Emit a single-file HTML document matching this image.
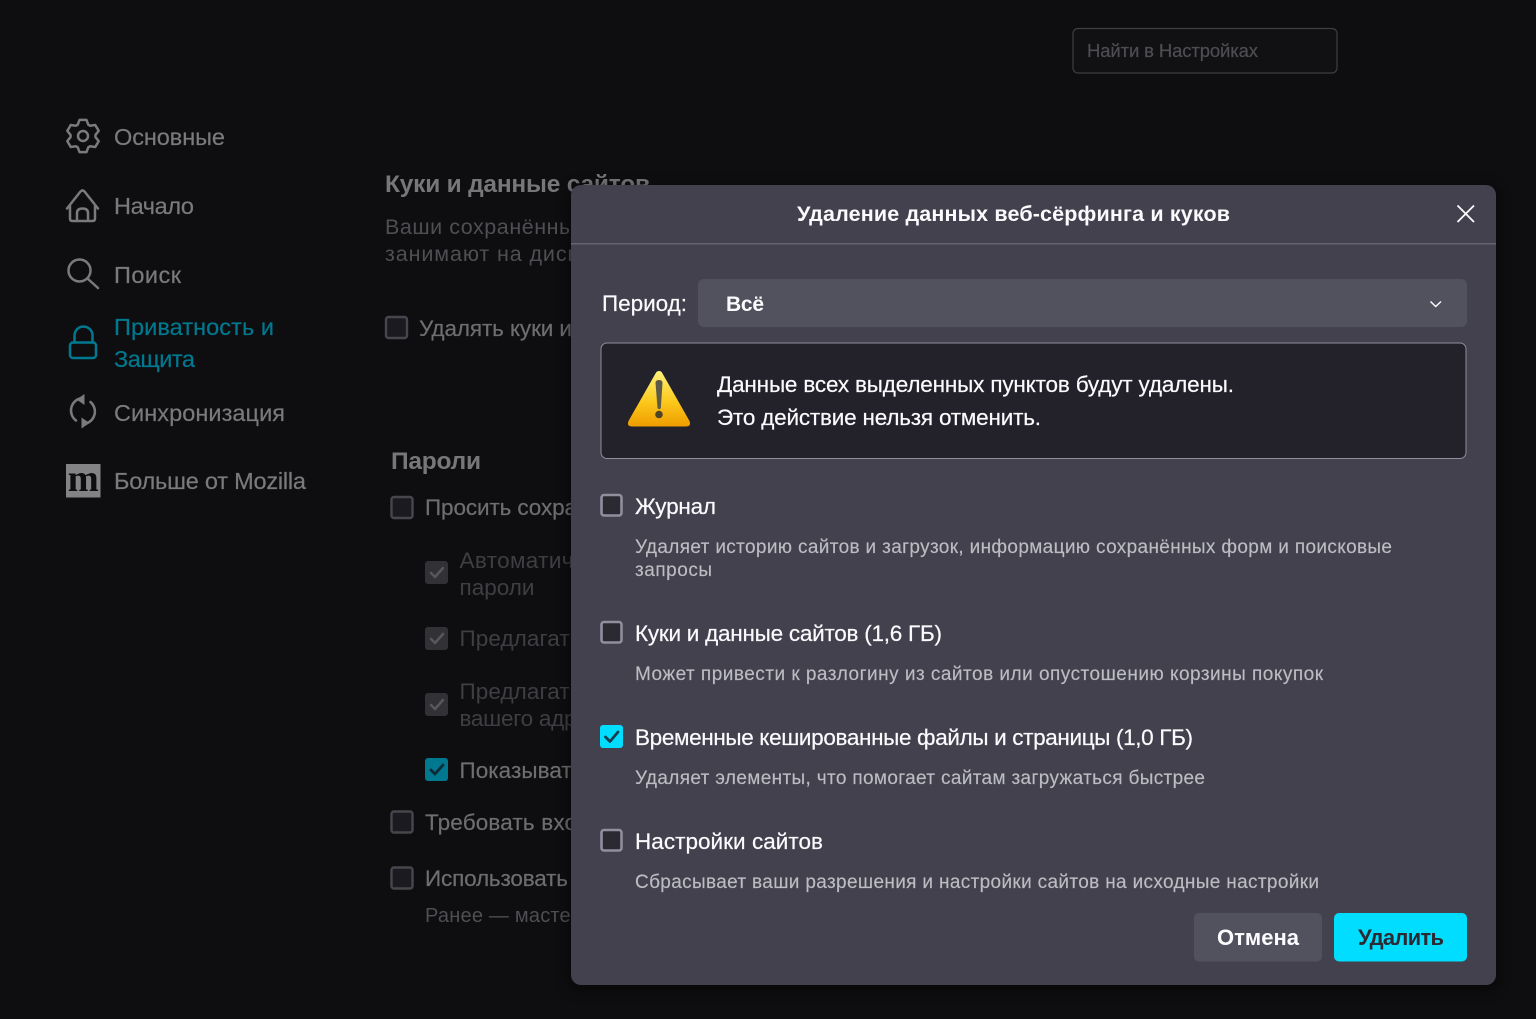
<!DOCTYPE html>
<html lang="ru">
<head>
<meta charset="utf-8">
<title>Настройки</title>
<style>
html,body{margin:0;padding:0;background:#0e0e10;width:1536px;height:1019px;overflow:hidden}
svg{display:block}
text{font-family:"Liberation Sans","Noto Sans CJK SC",sans-serif;white-space:pre}
.nav{font-size:23.5px;fill:#7a7a7d;stroke:#7a7a7d;stroke-width:.2px}
.h{font-size:24.5px;font-weight:bold;fill:#77777a}
.d{font-size:21.5px;fill:#4f4f53}
.l{font-size:22.5px;fill:#6e6e71;stroke:#6e6e71;stroke-width:.2px}
.dis{font-size:22.5px;fill:#3f3f43}
.cb{fill:#1b1a20;stroke:#47464c;stroke-width:2.4}
.w{font-size:22.5px;fill:#fbfbfe;stroke:#fbfbfe;stroke-width:.2px}
.s{font-size:19px;fill:#bcbcc3;stroke:#bcbcc3;stroke-width:.15px}
.c{fill:#2b2a33;stroke:#8f8f9d;stroke-width:2.6}
</style>
</head>
<body>
<svg width="1536" height="1019" viewBox="0 0 1536 1019" xmlns="http://www.w3.org/2000/svg">
<defs>
<linearGradient id="y" x1="0" y1="0" x2="0" y2="1"><stop offset="0" stop-color="#fff27a"/><stop offset=".55" stop-color="#fcc91c"/><stop offset="1" stop-color="#ef9c00"/></linearGradient>
<filter id="sh" x="-5%" y="-5%" width="110%" height="110%"><feGaussianBlur stdDeviation="6"/></filter>
</defs>
<rect width="1536" height="1019" fill="#0e0e10"/>

<!-- search -->
<rect x="1073" y="28.500" width="264" height="44.500" rx="5" fill="#111114" stroke="#3e3e41" stroke-width="1.200"/>
<text x="1087" y="57" font-size="18.500" fill="#4e4e52" stroke="#4e4e52" stroke-width=".2" textLength="171">Найти в Настройках</text>

<!-- nav icons -->
<g fill="none" stroke="#7a7a7d" stroke-width="2.500" stroke-linejoin="round" stroke-linecap="round">
<g transform="translate(83 136)">
<path d="M-5.280-11.330-3.430-16.140 3.430-16.140 5.280-11.330 7.170-10.240 12.260-11.040 15.690-5.100 12.450-1.090 12.450 1.090 15.690 5.100 12.260 11.040 7.170 10.240 5.280 11.330 3.430 16.140-3.430 16.140-5.280 11.330-7.170 10.240-12.260 11.040-15.690 5.100-12.450 1.090-12.450-1.090-15.690-5.100-12.260-11.040-7.170-10.240Z"/>
<circle r="5"/>
</g>
<path d="M67 208.500 80.500 191.500Q82.500 189.500 84.500 191.500L98 208.500M70 206V218.500Q70 221 72.500 221H92.500Q95 221 95 218.500V206M77 221V213Q77 208.500 82.500 208.500 88 208.500 88 213V221"/>
<circle cx="79.500" cy="270.500" r="11"/>
<path d="M88 279 98 288"/>
<path d="M74.500 342.500V335.500A9 9 0 0 1 92.500 335.500V342.500" stroke="#00788f"/>
<rect x="70" y="342.500" width="26" height="15.500" rx="3" stroke="#00788f"/>
<path d="M80 398.500A12.500 12.500 0 0 0 76 420.500M86 423.500A12.500 12.500 0 0 0 90.500 402"/>
</g>
<path d="M84.500 394 76.500 399.500 84.500 405ZM81.500 417.500 89.500 423 81.500 428.500Z" fill="#7a7a7d"/>
<rect x="66" y="464" width="34.500" height="33.500" fill="#838386"/>
<text x="83.300" y="491" font-size="38" font-weight="bold" text-anchor="middle" fill="#0e0e10" style='font-family:"Liberation Serif",serif' textLength="31" lengthAdjust="spacingAndGlyphs">m</text>

<!-- nav text -->
<text class="nav" x="114" y="145" textLength="111">Основные</text>
<text class="nav" x="114" y="214" textLength="80">Начало</text>
<text class="nav" x="114" y="283" textLength="67">Поиск</text>
<text class="nav" x="114" y="335" textLength="160" style="fill:#00788f;stroke:#00788f">Приватность и</text>
<text class="nav" x="114" y="367" textLength="81" style="fill:#00788f;stroke:#00788f">Защита</text>
<text class="nav" x="114" y="421" textLength="171">Синхронизация</text>
<text class="nav" x="114" y="489" textLength="192">Больше от Mozilla</text>

<!-- page content -->
<text class="h" x="385" y="192" textLength="265">Куки и данные сайтов</text>
<text class="d" x="385" y="234" textLength="202">Ваши сохранённые</text>
<text class="d" x="385" y="261" textLength="205">занимают на диске</text>
<rect class="cb" x="386" y="317" width="21" height="21" rx="2.500"/>
<text class="l" x="419" y="336" textLength="153">Удалять куки и</text>
<text class="h" x="391" y="469" textLength="90">Пароли</text>
<rect class="cb" x="391.500" y="497" width="21" height="21" rx="2.500"/>
<text class="l" x="425" y="515" textLength="152">Просить сохра</text>

<g fill="#323136"><rect x="425" y="561" width="23" height="23" rx="3"/><rect x="425" y="627" width="23" height="23" rx="3"/><rect x="425" y="693" width="23" height="23" rx="3"/></g>
<g fill="none" stroke="#58585c" stroke-width="2.500" stroke-linecap="round" stroke-linejoin="round"><path d="M431 573l4 4 8-9"/><path d="M431 639l4 4 8-9"/><path d="M431 705l4 4 8-9"/></g>
<rect x="425" y="758" width="23" height="23" rx="3" fill="#00788f"/>
<path d="M431 770l4 4 8-9" fill="none" stroke="#0e2a36" stroke-width="2.800" stroke-linecap="round" stroke-linejoin="round"/>

<text class="dis" x="459.500" y="568" textLength="114">Автоматич</text>
<text class="dis" x="459.500" y="595" textLength="75">пароли</text>
<text class="dis" x="459.500" y="646" textLength="122">Предлагать</text>
<text class="dis" x="459.500" y="699" textLength="122">Предлагать</text>
<text class="dis" x="459.500" y="726" textLength="117">вашего адр</text>
<text class="l" x="459.500" y="778" textLength="124">Показывать</text>
<rect class="cb" x="391.500" y="811.500" width="21" height="21" rx="2.500"/>
<text class="l" x="425" y="830" textLength="152">Требовать вхо</text>
<rect class="cb" x="391.500" y="867.500" width="21" height="21" rx="2.500"/>
<text class="l" x="425" y="886" textLength="143">Использовать</text>
<text class="d" x="425" y="922" textLength="157" style="font-size:20px">Ранее — мастер</text>

<!-- dialog -->
<rect x="567" y="185" width="933" height="806" rx="12" fill="#000" opacity=".35" filter="url(#sh)"/>
<rect x="571" y="185" width="925" height="800" rx="10" fill="#42414d"/>
<rect x="571" y="243" width="925" height="1.500" fill="#65646f"/>
<text x="797" y="221" font-size="21.500" font-weight="bold" fill="#fbfbfe" textLength="433">Удаление данных веб-сёрфинга и куков</text>
<path d="M1457.500 205.500 1474 222M1474 205.500 1457.500 222" stroke="#fbfbfe" stroke-width="1.800" fill="none"/>

<text class="w" x="602" y="311" textLength="85">Период:</text>
<rect x="698" y="279" width="769" height="48" rx="6" fill="#52525e"/>
<text x="726" y="311" font-size="21" font-weight="bold" fill="#fbfbfe" textLength="38">Всё</text>
<path d="M1430.500 301.500 1435.700 306.500 1441 301.500" fill="none" stroke="#fbfbfe" stroke-width="1.500"/>

<rect x="601" y="343" width="865" height="115.500" rx="6" fill="#23222b" stroke="#8f8f9d" stroke-width="1"/>
<path d="M659 371Q661.500 371 662.500 373.500L689.500 421Q691.500 426.500 686 426.500H632Q626.500 426.500 628.500 421L655.500 373.500Q656.800 371 659 371Z" fill="url(#y)"/>
<path d="M655.500 383Q655.500 380 659 380 662.500 380 662.500 383L660.800 408Q659.200 410.500 657.500 408Z" fill="#5e5a48"/>
<circle cx="659" cy="414.500" r="3.800" fill="#4e4528"/>
<text class="w" x="717" y="392" textLength="517">Данные всех выделенных пунктов будут удалены.</text>
<text class="w" x="717" y="425" textLength="324">Это действие нельзя отменить.</text>

<rect class="c" x="601.500" y="495" width="20" height="20.500" rx="2.500"/>
<text class="w" x="635" y="514" textLength="81">Журнал</text>
<text class="s" x="635" y="553" textLength="757">Удаляет историю сайтов и загрузок, информацию сохранённых форм и поисковые</text>
<text class="s" x="635" y="576" textLength="77">запросы</text>

<rect class="c" x="601.500" y="622" width="20" height="20.500" rx="2.500"/>
<text class="w" x="635" y="641" textLength="307">Куки и данные сайтов (1,6 ГБ)</text>
<text class="s" x="635" y="680" textLength="688">Может привести к разлогину из сайтов или опустошению корзины покупок</text>

<rect x="600" y="725" width="23" height="23" rx="3" fill="#00ddff"/>
<path d="M605.500 737l4.500 4.500 8-9.500" fill="none" stroke="#15404f" stroke-width="2.800" stroke-linecap="round" stroke-linejoin="round"/>
<text class="w" x="635" y="745" textLength="558">Временные кешированные файлы и страницы (1,0 ГБ)</text>
<text class="s" x="635" y="784" textLength="570">Удаляет элементы, что помогает сайтам загружаться быстрее</text>

<rect class="c" x="601.500" y="830" width="20" height="20.500" rx="2.500"/>
<text class="w" x="635" y="849" textLength="188">Настройки сайтов</text>
<text class="s" x="635" y="888" textLength="684">Сбрасывает ваши разрешения и настройки сайтов на исходные настройки</text>

<rect x="1194" y="913" width="128" height="48.500" rx="5" fill="#52525e"/>
<text x="1217" y="945" font-size="22" font-weight="bold" fill="#fbfbfe" textLength="82">Отмена</text>
<rect x="1334" y="913" width="133" height="48.500" rx="5" fill="#00ddff"/>
<text x="1358" y="945" font-size="22" font-weight="bold" fill="#2b2a33" textLength="86">Удалить</text>
</svg>
</body>
</html>
